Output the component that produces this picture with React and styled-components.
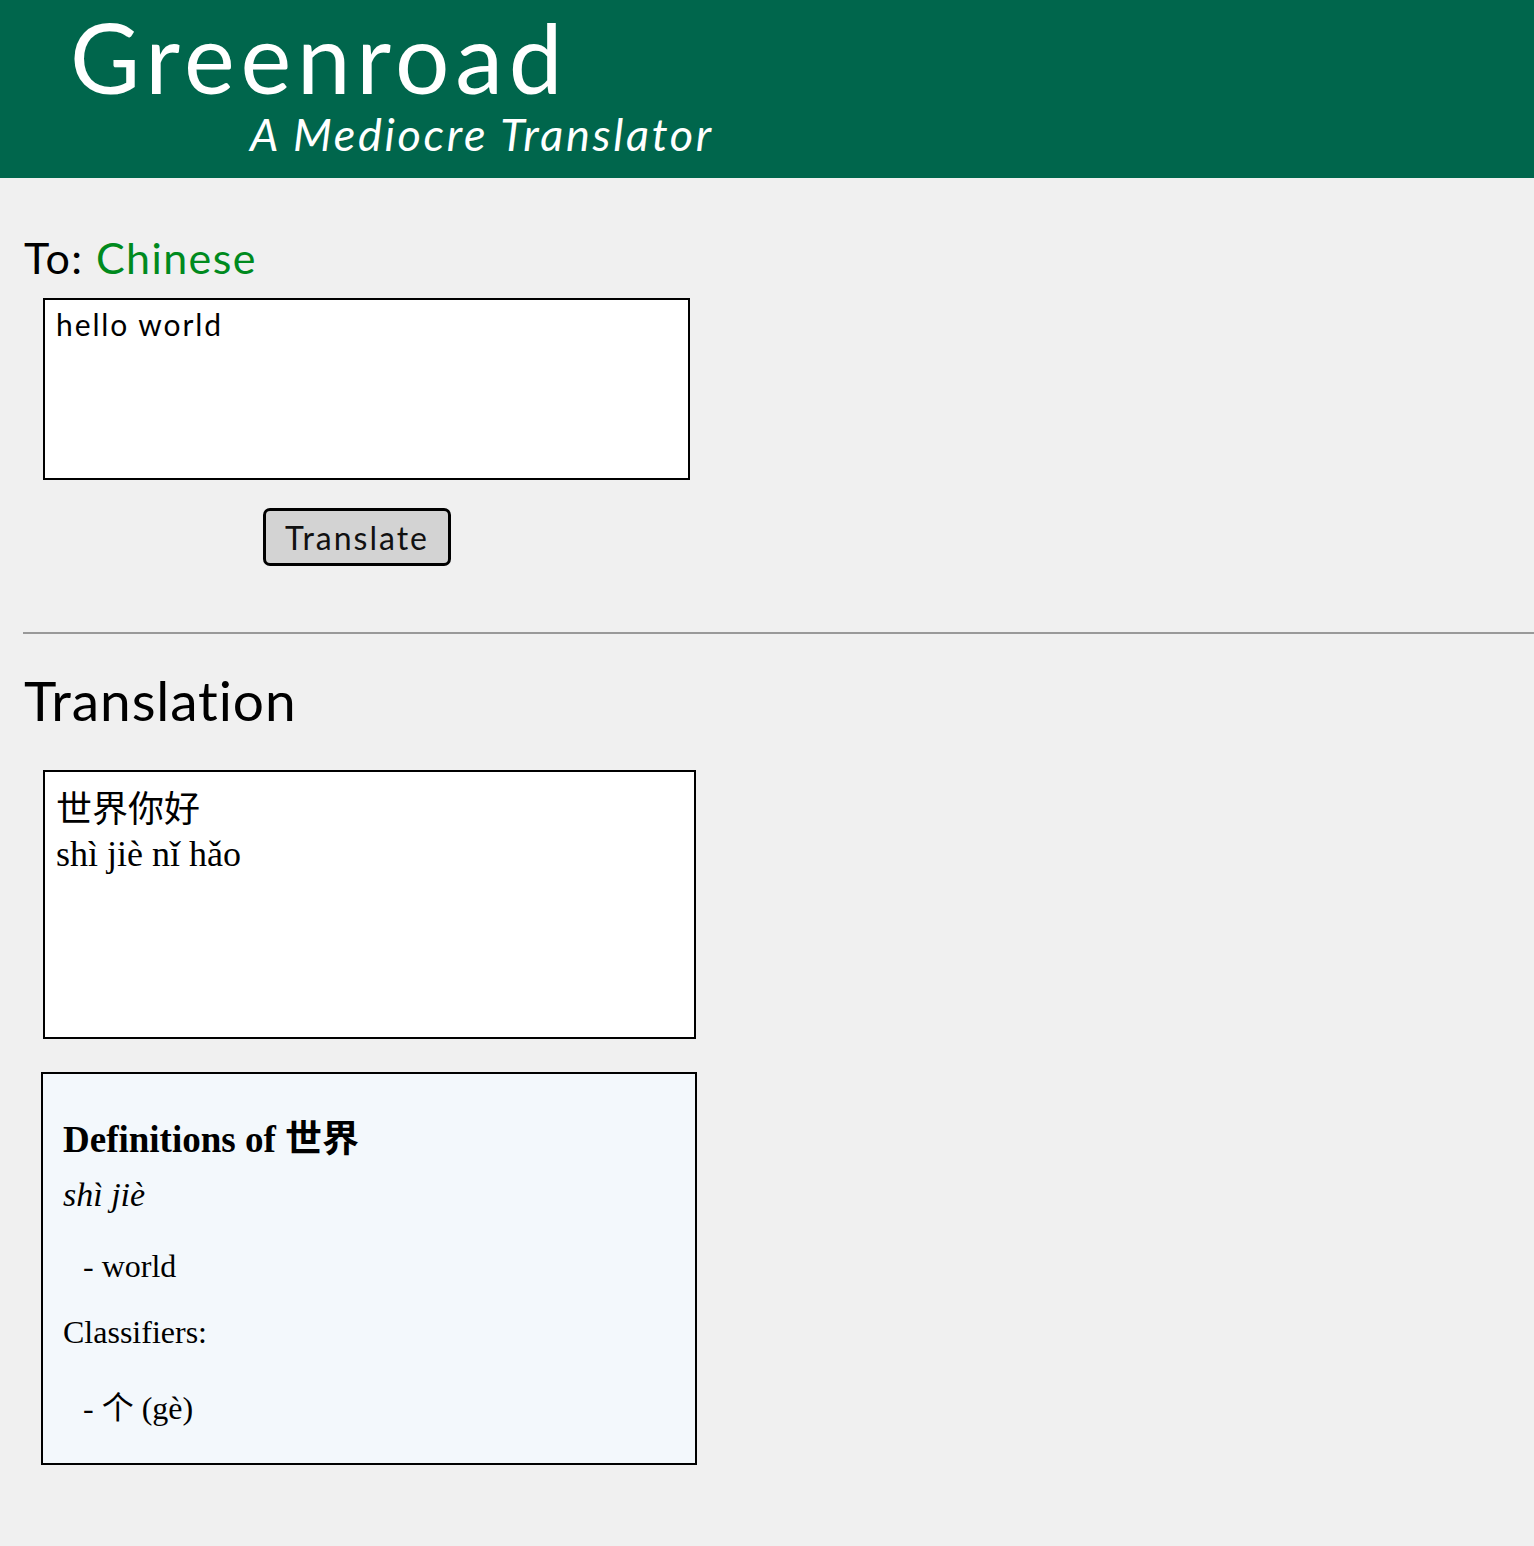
import React, { useState } from 'react';
import styled, { createGlobalStyle } from 'styled-components';

const GlobalStyle = createGlobalStyle`
  html, body {
    margin: 0;
    padding: 0;
    background: #f0f0f0;
    font-family: Lato, "Noto Sans", sans-serif;
  }
`;

const Header = styled.header`
  background: #00664c;
  height: 178px;
  box-sizing: border-box;
  padding: 10px 0 0 70px;
  color: #ffffff;
`;

const Logo = styled.h1`
  margin: 0;
  font-size: 96px;
  font-weight: 400;
  line-height: 94px;
  letter-spacing: 5.8px;
`;

const Tagline = styled.div`
  margin: 4px 0 0 180px;
  font-size: 45px;
  font-style: italic;
  line-height: 52px;
  letter-spacing: 2.7px;
`;

const Main = styled.main`
  padding: 54px 0 60px 24px;
`;

const TargetLine = styled.div`
  font-size: 43px;
  line-height: 52px;
  letter-spacing: 1.4px;
  color: #000;
`;

const Language = styled.span`
  color: #008a1e;
`;

const InputBox = styled.textarea`
  display: block;
  margin: 14px 0 0 19px;
  width: 647px;
  height: 182px;
  box-sizing: border-box;
  border: 2px solid #000;
  background: #fff;
  padding: 6px 11px;
  font-family: Lato, "Noto Sans", sans-serif;
  font-size: 30px;
  letter-spacing: 1.9px;
  color: #000;
  resize: none;
  outline: none;
`;

const ButtonRow = styled.div`
  width: 666px;
  display: flex;
  justify-content: center;
  margin-top: 28px;
`;

const TranslateButton = styled.button`
  width: 188px;
  height: 58px;
  box-sizing: border-box;
  border: 3px solid #000;
  border-radius: 7px;
  background: #d3d3d3;
  font-family: Lato, "Noto Sans", sans-serif;
  font-size: 32px;
  letter-spacing: 2px;
  color: #111;
  cursor: pointer;
`;

const Divider = styled.hr`
  margin: 66px 0 0 -1px;
  border: none;
  border-top: 2px solid #999;
`;

const SectionTitle = styled.h2`
  margin: 34px 0 0;
  font-size: 55px;
  font-weight: 400;
  line-height: 64px;
  letter-spacing: 0.9px;
`;

const OutputBox = styled.div`
  margin: 38px 0 0 19px;
  width: 653px;
  height: 269px;
  box-sizing: border-box;
  border: 2px solid #000;
  background: #fff;
  padding: 16px 11px;
  font-family: "Liberation Serif", "Noto Sans CJK SC", serif;
  font-size: 36px;
  line-height: 44px;
`;

const DefinitionBox = styled.section`
  margin: 33px 0 0 17px;
  width: 656px;
  box-sizing: border-box;
  border: 2px solid #000;
  background: #f3f8fc;
  padding: 40px 20px 36px;
  font-family: "Liberation Serif", "Noto Sans CJK SC", serif;
  font-size: 32px;
  color: #000;
`;

const DefTitle = styled.h3`
  margin: 0;
  font-size: 37px;
  font-weight: 700;
  line-height: 52px;
`;

const DefPinyin = styled.div`
  font-style: italic;
  font-size: 34px;
  line-height: 58px;
`;

const DefItem = styled.p`
  margin: ${(p) => p.$gap || 18}px 0 0;
  padding-left: ${(p) => (p.$indent ? 20 : 0)}px;
  line-height: 38px;
`;

const App = () => {
  const [text, setText] = useState('hello world');
  return (
    <>
      <GlobalStyle />
      <Header>
        <Logo>Greenroad</Logo>
        <Tagline>A Mediocre Translator</Tagline>
      </Header>
      <Main>
        <TargetLine>
          To: <Language>Chinese</Language>
        </TargetLine>
        <InputBox value={text} onChange={(e) => setText(e.target.value)} />
        <ButtonRow>
          <TranslateButton>Translate</TranslateButton>
        </ButtonRow>
        <Divider />
        <SectionTitle>Translation</SectionTitle>
        <OutputBox>
          <div>世界你好</div>
          <div>shì jiè nǐ hǎo</div>
        </OutputBox>
        <DefinitionBox>
          <DefTitle>Definitions of 世界</DefTitle>
          <DefPinyin>shì jiè</DefPinyin>
          <DefItem $indent $gap={23}>- world</DefItem>
          <DefItem $gap={28}>Classifiers:</DefItem>
          <DefItem $indent $gap={38}>- 个 (gè)</DefItem>
        </DefinitionBox>
      </Main>
    </>
  );
};

export default App;
